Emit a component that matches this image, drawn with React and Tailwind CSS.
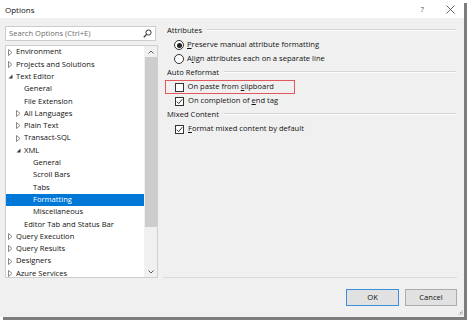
import React from "react";

const tree = [
  { t: "Environment", l: 0, a: "c" },
  { t: "Projects and Solutions", l: 0, a: "c" },
  { t: "Text Editor", l: 0, a: "o" },
  { t: "General", l: 1 },
  { t: "File Extension", l: 1 },
  { t: "All Languages", l: 1, a: "c" },
  { t: "Plain Text", l: 1, a: "c" },
  { t: "Transact-SQL", l: 1, a: "c" },
  { t: "XML", l: 1, a: "o" },
  { t: "General", l: 2 },
  { t: "Scroll Bars", l: 2 },
  { t: "Tabs", l: 2 },
  { t: "Formatting", l: 2, sel: true },
  { t: "Miscellaneous", l: 2 },
  { t: "Editor Tab and Status Bar", l: 1 },
  { t: "Query Execution", l: 0, a: "c" },
  { t: "Query Results", l: 0, a: "c" },
  { t: "Designers", l: 0, a: "c" },
  { t: "Azure Services", l: 0, a: "c" },
];

const lvlPad = ["pl-[2px]", "pl-[10px]", "pl-[19px]"];

function Arrow({ a, sel }) {
  if (a === "c")
    return (
      <svg width="5" height="7" viewBox="0 0 5 7">
        <polygon points="0.5,0.5 4,3.5 0.5,6.5" fill="none" stroke={sel ? "#fff" : "#7a7a7a"} strokeWidth="0.9" />
      </svg>
    );
  if (a === "o")
    return (
      <svg width="5" height="5" viewBox="0 0 5 5">
        <polygon points="4.5,0.5 4.5,4.5 0.5,4.5" fill="#3c3c3c" />
      </svg>
    );
  return null;
}

function Header({ children }) {
  return (
    <div className="flex items-center h-[14px] pl-[4px] pr-[1px]">
      <span>{children}</span>
      <div className="flex-1 ml-[5px] mb-[2px] flex flex-col">
        <div className="h-px bg-[#d6d6d6]" />
        <div className="h-px bg-[#fbfbfb]" />
      </div>
    </div>
  );
}

function Radio({ on }) {
  return (
    <div className="w-[10px] h-[10px] rounded-full border border-[#333] bg-white flex items-center justify-center">
      {on && <div className="w-[5px] h-[5px] rounded-full bg-[#222]" />}
    </div>
  );
}

function Check({ on }) {
  return (
    <div className="w-[9px] h-[9px] border border-[#333] bg-white flex items-center justify-center">
      {on && (
        <svg width="7" height="7" viewBox="0 0 7 7">
          <polyline points="0.8,3.6 2.7,5.6 6.3,1.2" fill="none" stroke="#222" strokeWidth="0.9" />
        </svg>
      )}
    </div>
  );
}

export default function App() {
  return (
    <div className="w-[474px] h-[324px] bg-white font-['Open_Sans',sans-serif] text-[7.6px] text-[#111] leading-none">
      <div className="relative w-[464px] h-[317px] bg-[#f0f0f0] shadow-[3px_3px_0_0_#7d7d7d] flex flex-col">
        {/* title bar */}
        <div className="h-[18px] bg-white flex items-center pl-[5px] pr-[9px]">
          <span className="text-[8px] pt-[1px]">Options</span>
          <span className="ml-auto text-[8px] text-[#555] mr-[22px]">?</span>
          <svg width="9" height="9" viewBox="0 0 9 9">
            <path d="M0.5 0.5 L8.5 8.5 M8.5 0.5 L0.5 8.5" stroke="#444" strokeWidth="0.8" />
          </svg>
        </div>

        {/* main */}
        <div className="h-[260px] flex pt-[8px] pl-[5px] pr-[7px] gap-[5px]">
          {/* left */}
          <div className="w-[153px] flex flex-col gap-[4px]">
            <div className="h-[15px] w-[151px] bg-white border border-[#cccccc] flex items-center pl-[3px] pr-[3px]">
              <span className="text-[#6d6d6d]">Search Options (Ctrl+E)</span>
              <svg className="ml-auto" width="9" height="9" viewBox="0 0 9 9">
                <circle cx="5.5" cy="3.5" r="2.6" fill="none" stroke="#333" strokeWidth="1" />
                <path d="M3.6 5.4 L0.8 8.2" stroke="#333" strokeWidth="1.3" />
              </svg>
            </div>
            <div className="h-[233px] bg-white border border-[#cfcfcf] flex overflow-hidden">
              <div className="flex-1 flex flex-col">
                {tree.map((r, i) => (
                  <div
                    key={i}
                    className={`h-[12.3px] shrink-0 flex items-center ${lvlPad[r.l]} ${r.sel ? "bg-[#0078d7] text-white" : ""}`}
                  >
                    <div className="w-[8px] flex items-center">
                      <Arrow a={r.a} sel={r.sel} />
                    </div>
                    <span>{r.t}</span>
                  </div>
                ))}
              </div>
              <div className="w-[13px] bg-[#f0f0f0] flex flex-col items-center">
                <div className="h-[11px] flex items-center justify-center">
                  <svg width="6" height="4" viewBox="0 0 6 4">
                    <polyline points="0.5,3.5 3,1 5.5,3.5" fill="none" stroke="#606060" strokeWidth="1" />
                  </svg>
                </div>
                <div className="w-[12px] h-[170px] bg-[#cdcdcd]" />
                <div className="flex-1" />
                <div className="h-[11px] flex items-center justify-center">
                  <svg width="6" height="4" viewBox="0 0 6 4">
                    <polyline points="0.5,0.5 3,3 5.5,0.5" fill="none" stroke="#606060" strokeWidth="1" />
                  </svg>
                </div>
              </div>
            </div>
          </div>

          {/* right */}
          <div className="flex-1 flex flex-col border-b border-[#dadada] -mt-[2px]">
            <Header>Attributes</Header>
            <div className="h-[14px] flex items-center pl-[11px] gap-[3px]">
              <Radio on />
              <span>
                <u>P</u>reserve manual attribute formatting
              </span>
            </div>
            <div className="h-[14px] flex items-center pl-[11px] gap-[3px]">
              <Radio />
              <span>
                A<u>l</u>ign attributes each on a separate line
              </span>
            </div>
            <Header>Auto Reformat</Header>
            <div className="h-[14px] w-[130px] ml-[2px] border-[1.5px] border-[#e0585b] flex items-center pl-[8.5px] gap-[4px]">
              <Check />
              <span>
                On paste from <u>c</u>lipboard
              </span>
            </div>
            <div className="h-[14px] flex items-center pl-[12px] gap-[4px]">
              <Check on />
              <span>
                On completion of <u>e</u>nd tag
              </span>
            </div>
            <Header>Mixed Content</Header>
            <div className="h-[14px] flex items-center pl-[12px] gap-[4px]">
              <Check on />
              <span>
                <u>F</u>ormat mixed content by default
              </span>
            </div>
          </div>
        </div>

        {/* footer */}
        <div className="flex justify-end gap-[6px] pr-[7px] mt-[11px]">
          <button className="w-[53px] h-[17px] bg-[#e1e1e1] border border-[#3c8fdc] flex items-center justify-center">
            OK
          </button>
          <button className="w-[52px] h-[17px] bg-[#e1e1e1] border border-[#adadad] flex items-center justify-center">
            Cancel
          </button>
        </div>

        <svg className="absolute right-[1px] bottom-[2px]" width="5" height="5" viewBox="0 0 5 5">
          <rect x="3.5" y="0.5" width="1" height="1" fill="#999" />
          <rect x="2" y="2" width="1" height="1" fill="#999" />
          <rect x="3.5" y="2" width="1" height="1" fill="#999" />
          <rect x="0.5" y="3.5" width="1" height="1" fill="#999" />
          <rect x="2" y="3.5" width="1" height="1" fill="#999" />
          <rect x="3.5" y="3.5" width="1" height="1" fill="#999" />
        </svg>
      </div>
    </div>
  );
}
